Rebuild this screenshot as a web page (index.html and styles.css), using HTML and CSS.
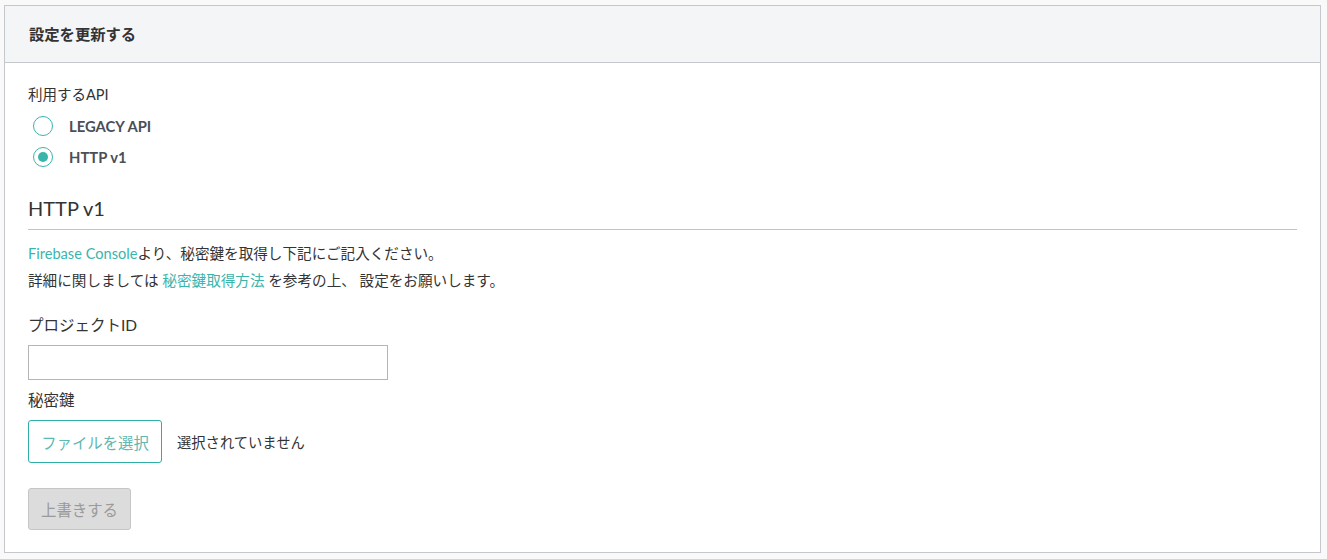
FILE: index.html
```html
<!DOCTYPE html>
<html lang="ja">
<head>
<meta charset="utf-8">
<title>設定を更新する</title>
<link rel="stylesheet" href="styles.css">
</head>
<body>
<div class="card">
  <div class="card-header">設定を更新する</div>
  <div class="card-body">
    <div class="field-label">利用するAPI</div>
    <div class="radio-group">
      <label class="radio-row"><span class="radio"></span><span class="radio-text">LEGACY API</span></label>
      <label class="radio-row"><span class="radio checked"></span><span class="radio-text">HTTP v1</span></label>
    </div>
    <h3 class="section-title">HTTP v1</h3>
    <p class="desc"><a class="link">Firebase Console</a>より、秘密鍵を取得し下記にご記入ください。</p>
    <p class="desc">詳細に関しましては <a class="link">秘密鍵取得方法</a> を参考の上、 設定をお願いします。</p>
    <div class="form-label">プロジェクトID</div>
    <div class="text-input"></div>
    <div class="form-label">秘密鍵</div>
    <div class="file-row">
      <span class="file-btn">ファイルを選択</span>
      <span class="file-status">選択されていません</span>
    </div>
    <span class="submit-btn">上書きする</span>
  </div>
</div>
</body>
</html>
```
FILE: styles.css
```css
* { box-sizing: border-box; }
html, body { margin: 0; }
body {
  background: #f9f9f9;
  padding: 5px 6px 0 4px;
  font-family: Lato, "Noto Sans CJK JP", sans-serif;
  color: #333;
}
.card {
  background: #fff;
  border: 1px solid #c4c8cc;
  width: 1317px;
}
.card-header {
  background: #f4f5f7;
  border-bottom: 1px solid #c4c8cc;
  height: 57px;
  padding: 0 24px 2px;
  display: flex;
  align-items: center;
  font-size: 15.3px;
  font-weight: 700;
  color: #333;
}
.card-body {
  padding: 22px 23px 22px 23px;
  display: flex;
  flex-direction: column;
  align-items: flex-start;
}
.field-label {
  font-size: 14.5px;
  line-height: 20px;
  color: #333;
}
.radio-group {
  margin-top: 5px;
  margin-bottom: 1px;
  display: flex;
  flex-direction: column;
}
.radio-row {
  height: 31px;
  display: flex;
  align-items: center;
  padding-left: 5px;
}
.radio {
  width: 20px;
  height: 20px;
  border: 1.5px solid #3ab5ab;
  border-radius: 50%;
  display: flex;
  align-items: center;
  justify-content: center;
}
.radio.checked::after {
  content: "";
  width: 10px;
  height: 10px;
  border-radius: 50%;
  background: #3ab5ab;
}
.radio-text {
  margin-left: 16px;
  font-size: 14.8px;
  font-weight: 700;
  color: #4a4f57;
}
.section-title {
  align-self: stretch;
  margin: 22px 0 0 0;
  font-size: 20px;
  font-weight: 400;
  line-height: 26px;
  padding-bottom: 8px;
  border-bottom: 1px solid #c4c4c4;
  color: #333;
}
.desc {
  margin: 0;
  font-size: 14.6px;
  line-height: 27px;
  color: #333;
}
.section-title + .desc { margin-top: 10px; }
.link { color: #3ab5ab; text-decoration: none; }
.form-label {
  font-size: 15.5px;
  line-height: 20px;
  margin-top: 21px;
  color: #333;
}
.text-input + .form-label { margin-top: 10px; }
.text-input {
  margin-top: 10px;
  width: 360px;
  height: 35px;
  border: 1px solid #b5b5b5;
  background: #fff;
}
.file-row {
  margin-top: 10px;
  display: flex;
  align-items: center;
}
.file-btn {
  height: 43px;
  width: 134px;
  border: 1px solid #2fb0a6;
  border-radius: 3px;
  display: flex;
  align-items: center;
  justify-content: center;
  font-size: 15.4px;
  color: #5fb8b1;
}
.file-status {
  margin-left: 15px;
  font-size: 14.3px;
  color: #333;
}
.submit-btn {
  margin-top: 25px;
  width: 103px;
  height: 42px;
  border: 1px solid #c6c6c6;
  border-radius: 3px;
  background: #dcdcdc;
  color: #9a9a9a;
  display: flex;
  align-items: center;
  justify-content: center;
  font-size: 15.4px;
}
```
